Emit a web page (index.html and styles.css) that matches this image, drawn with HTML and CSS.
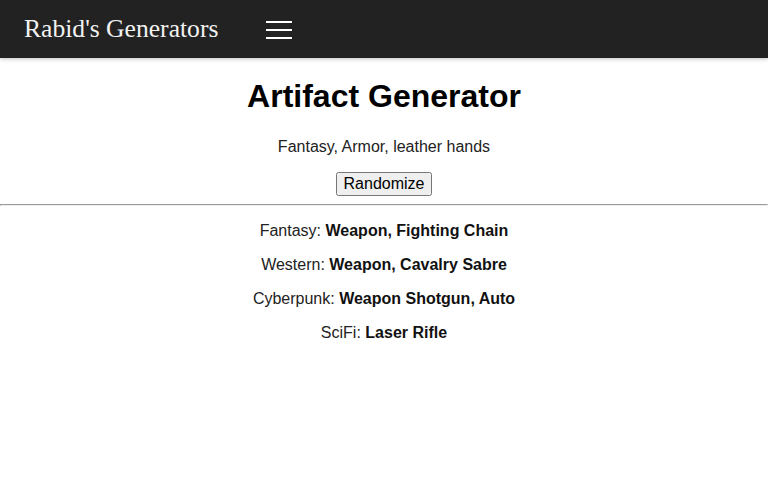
FILE: index.html
```html
<!DOCTYPE html>
<html lang="en">
<head>
    <meta charset="UTF-8">
    <meta name="viewport" content="width=device-width, initial-scale=1.0">
    <title>Artifact Generator</title>
    <link rel="stylesheet" href="styles.css">
</head>
<body>
    <nav class="navbar">
        <a class="brand" href="#">Rabid's Generators</a>
        <button class="menu-toggle" aria-label="Menu">
            <span></span>
            <span></span>
            <span></span>
        </button>
    </nav>

    <main class="generator">
        <h1>Artifact Generator</h1>
        <p class="current">Fantasy, Armor, leather hands</p>
        <div class="actions"><button id="randomizeButton">Randomize</button></div>
        <hr>
        <div class="results">
            <p>Fantasy: <strong>Weapon, Fighting Chain</strong></p>
            <p>Western: <strong>Weapon, Cavalry Sabre</strong></p>
            <p>Cyberpunk: <strong>Weapon Shotgun, Auto</strong></p>
            <p>SciFi: <strong>Laser Rifle</strong></p>
        </div>
    </main>
</body>
</html>
```

FILE: styles.css
```css
body {
    margin: 0;
    font-family: "Liberation Sans", Arial, sans-serif;
    background-color: #fff;
    color: #000;
}

.navbar {
    display: flex;
    align-items: center;
    gap: 48px;
    height: 58px;
    padding: 0 24px;
    background-color: #222;
    box-shadow: 0 1px 4px rgba(0, 0, 0, 0.25);
}

.brand {
    font-family: "Liberation Serif", "Times New Roman", serif;
    font-size: 25.6px;
    color: #f2f2f2;
    text-decoration: none;
}

.menu-toggle {
    display: flex;
    flex-direction: column;
    gap: 6px;
    padding: 0;
    margin-top: 1px;
    border: none;
    background: none;
    cursor: pointer;
}

.menu-toggle span {
    display: block;
    width: 26px;
    height: 2px;
    background-color: #fff;
}

.generator {
    text-align: center;
}

h1 {
    font-size: 32px;
    margin: 20px 0 23px;
}

p {
    margin: 16px 0;
    font-size: 16px;
}

.current {
    color: #222;
}

.actions button {
    font-family: "Liberation Sans", Arial, sans-serif;
    font-size: 16px;
}

hr {
    margin: 8px 0;
}

.results p {
    color: #222;
}

.results strong {
    color: #111;
}
```
